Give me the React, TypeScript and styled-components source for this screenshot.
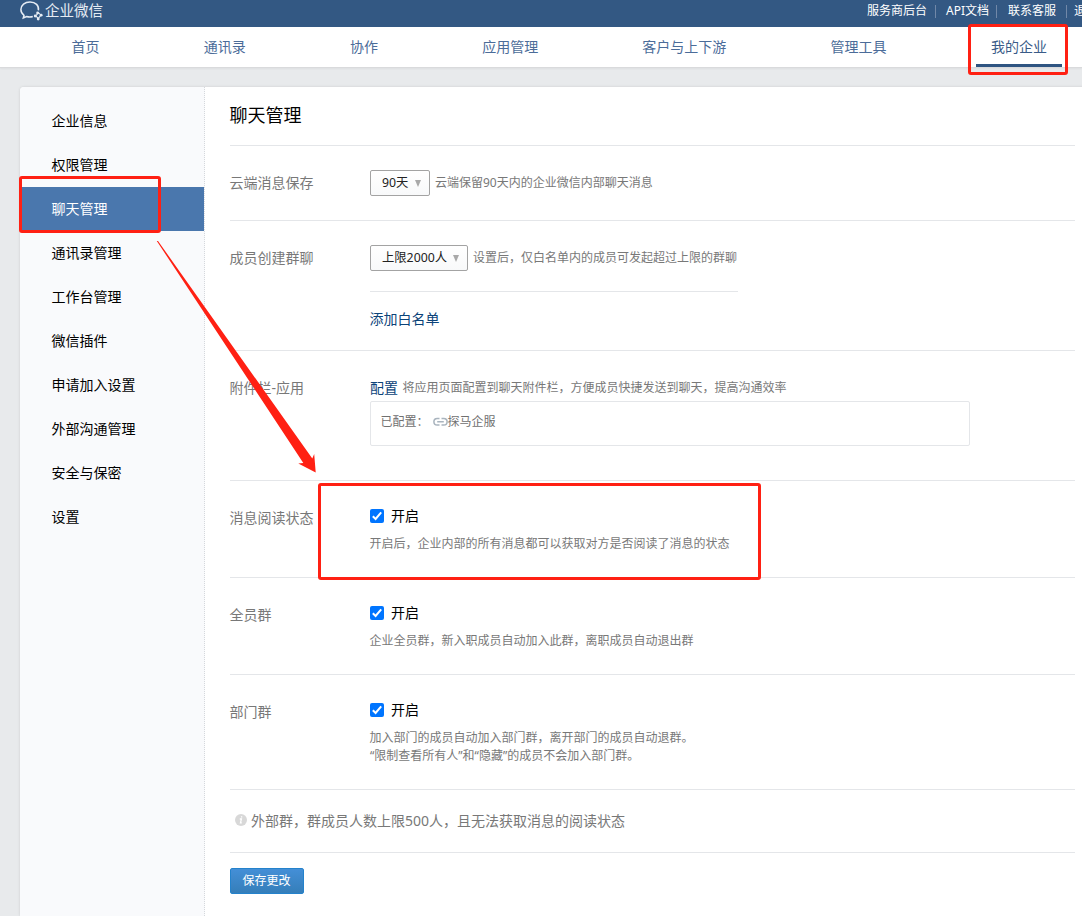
import React from 'react';
import styled, { createGlobalStyle } from 'styled-components';

const GlobalStyle = createGlobalStyle`
  * { box-sizing: border-box; }
  body {
    margin: 0;
    background: #e8eaec;
    color: #000;
    font: 14px/20px "Noto Sans", "Noto Sans CJK SC", sans-serif;
    overflow: hidden;
  }
`;

const Page = styled.div`
  position: relative;
  width: 1082px;
  height: 916px;
  overflow: hidden;
  display: flex;
  flex-direction: column;
`;

const TopBar = styled.header`
  flex: none;
  height: 27px;
  padding-left: 20px;
  background: #335883;
  color: #fff;
  display: flex;
  justify-content: space-between;
`;

const Brand = styled.div`
  display: flex;
  gap: 2px;
  height: 21px;
  font-size: 14.5px;
  line-height: 21px;
  color: #e6ecf4;
  white-space: nowrap;
`;

const TopLinks = styled.div`
  display: flex;
  width: 215px;
  overflow: hidden;
  font-size: 12px;
  line-height: 22px;
  white-space: nowrap;
`;

const TopLink = styled.a<{ $gap?: number }>`
  flex: none;
  height: 22px;
  margin-right: ${p => p.$gap ?? 9}px;
`;

const TopSeparator = styled.i<{ $gap?: number }>`
  flex: none;
  width: 1px;
  height: 13px;
  margin: 5px ${p => p.$gap ?? 10}px 0 0;
  background: #7188a8;
`;

const NavBar = styled.nav`
  flex: none;
  height: 41px;
  padding-left: 19.5px;
  background: #fff;
  border-bottom: 1px solid #d9dadc;
  box-shadow: 0 1px 2px rgba(0, 0, 0, 0.05);
  display: flex;
`;

const NavItem = styled.a<{ $active?: boolean }>`
  flex: none;
  height: 40px;
  padding: 0 ${p => (p.$active ? 15 : 52.1)}px;
  margin-left: ${p => (p.$active ? 37.4 : 0)}px;
  border-bottom: ${p => (p.$active ? '3px solid #2e5481' : '0')};
  color: ${p => (p.$active ? '#3a5b88' : '#4b6c99')};
  line-height: 40px;
  white-space: nowrap;
`;

const Panel = styled.main`
  flex: 1;
  margin: 19px 0 0 20px;
  width: 1100px;
  background: #fff;
  border-radius: 4px 0 0 0;
  box-shadow: 0 0 3px rgba(0, 0, 0, 0.12);
  overflow: hidden;
  display: flex;
`;

const Sidebar = styled.aside`
  flex: none;
  width: 185px;
  padding-top: 12px;
  background: #f9fafc;
  border-right: 1px dotted #d5d8dc;
`;

const SideItem = styled.a<{ $active?: boolean }>`
  display: block;
  height: 44px;
  padding-left: 31.5px;
  line-height: 44px;
  color: ${p => (p.$active ? '#fff' : '#000')};
  background: ${p => (p.$active ? '#4a77ad' : 'transparent')};
`;

const Content = styled.section`
  flex: none;
  width: 870px;
  padding-left: 25px;
`;

const Title = styled.h1`
  height: 59px;
  margin: 0;
  border-bottom: 1px solid #e4e6e9;
  font-size: 18px;
  font-weight: 400;
  line-height: 57px;
  text-indent: -0.5px;
`;

const Row = styled.div<{ $height: number }>`
  height: ${p => p.$height}px;
  padding-top: 24px;
  border-bottom: 1px solid #e4e6e9;
  display: flex;
`;

const Label = styled.div`
  flex: none;
  width: 140px;
  height: 26px;
  line-height: 26px;
  color: #787878;
  text-indent: -0.5px;
`;

const Field = styled.div``;

const Line = styled.div`
  display: flex;
  height: 26px;
  line-height: 26px;
  white-space: nowrap;
`;

const SelectBox = styled.button<{ $width: number }>`
  width: ${p => p.$width}px;
  height: 26px;
  margin: 0 5px 0 0;
  padding: 0 8px 0 11px;
  display: flex;
  align-items: center;
  justify-content: space-between;
  border: 1px solid #a3a3a3;
  border-radius: 2px;
  background: linear-gradient(#fff, #f8f9fa);
  color: #222;
  font: 12.3px/22px "Noto Sans", "Noto Sans CJK SC", sans-serif;
`;

const Caret = styled.i`
  border: solid transparent;
  border-width: 7px 3.5px 0;
  border-top-color: #a9a9a9;
`;

const Hint = styled.span<{ $gap?: number }>`
  margin-left: ${p => p.$gap ?? 0}px;
  font-size: 12px;
  color: #787878;
`;

const Description = styled.p`
  margin: 8px 0 0;
  font-size: 12px;
  line-height: 18px;
  color: #787878;
  white-space: nowrap;
  text-indent: -0.5px;
`;

const AddList = styled.div`
  width: 368px;
  margin-top: 20px;
  padding-top: 16px;
  border-top: 1px solid #e4e6e9;
  line-height: 22px;
  text-indent: -0.5px;
`;

const TextLink = styled.a`
  color: #0b4379;
`;

const ConfigBox = styled.div`
  width: 600px;
  height: 45px;
  padding: 0 0 4px 9.5px;
  border: 1px solid #e4e6e9;
  border-radius: 2px;
  display: flex;
  align-items: center;
  font-size: 12px;
  line-height: 18px;
  color: #707070;
`;

const ConfigIcon = styled.svg`
  margin-left: 4px;
`;

const CheckLine = styled.label`
  display: flex;
  align-items: center;
  gap: 7px;
  height: 22px;
  line-height: 22px;
`;

const CheckMark = styled.svg`
  flex: none;
`;

const Notice = styled.div`
  height: 63px;
  padding-left: 5px;
  border-bottom: 1px solid #e4e6e9;
  display: flex;
  align-items: center;
  gap: 4px;
  color: #787878;
`;

const InfoIcon = styled.svg`
  margin-bottom: 2px;
`;

const SaveButton = styled.button`
  width: 74px;
  height: 26px;
  margin-top: 15px;
  padding: 0 1px 0 0;
  border: 1px solid #2482cc;
  border-radius: 2px;
  background: linear-gradient(#448fd7, #357eb9);
  color: #fff;
  font: 12px/22px "Noto Sans", "Noto Sans CJK SC", sans-serif;
`;

const Highlight = styled.div<{ $x: number; $y: number; $w: number; $h: number }>`
  position: absolute;
  left: ${p => p.$x}px;
  top: ${p => p.$y}px;
  width: ${p => p.$w}px;
  height: ${p => p.$h}px;
  border: 3px solid #ff2013;
  border-radius: 3px;
`;

const Arrow = styled.svg`
  position: absolute;
  left: 150px;
  top: 235px;
`;

const navItems = ['首页', '通讯录', '协作', '应用管理', '客户与上下游', '管理工具'];
const sideItems = [
  '企业信息', '权限管理', '聊天管理', '通讯录管理', '工作台管理',
  '微信插件', '申请加入设置', '外部沟通管理', '安全与保密', '设置',
];

const toggles = [
  { label: '消息阅读状态', height: 97, lines: ['开启后，企业内部的所有消息都可以获取对方是否阅读了消息的状态'] },
  { label: '全员群', height: 97, lines: ['企业全员群，新入职成员自动加入此群，离职成员自动退出群'] },
  { label: '部门群', height: 115, lines: ['加入部门的成员自动加入部门群，离开部门的成员自动退群。', '“限制查看所有人”和“隐藏”的成员不会加入部门群。'] },
];

const Checked = () => (
  <CheckMark width="14" height="14" viewBox="0 0 14 14">
    <rect width="14" height="14" rx="2" fill="#0075ff" />
    <path d="M2.8 7.3 5.6 10 11.2 3.4" fill="none" stroke="#fff" strokeWidth="2" />
  </CheckMark>
);

export default function App() {
  return (
    <>
      <GlobalStyle />
      <Page>
        <TopBar>
          <Brand>
            <svg width="23" height="22" viewBox="0 0 23 22" fill="none" stroke="#e6ecf4">
              <path d="M18.4 10.4C19.200 5.600 15.600 2 10 2 4.800 2 .9 5.300.9 9.600c0 2.400 1.200 4.400 3.100 5.700L3.300 17.900l3.300-1.400c2 .6 4.300.6 6.200 0" strokeWidth="1.5" />
              <path d="m18.400 12.700 2.500 2.500-2.600 3.300-2.600-2.600z" strokeWidth="1.100" />
              <g fill="#e6ecf4" stroke="none">
                <circle cx="17.600" cy="12.900" r="1.400" />
                <circle cx="21.200" cy="15.200" r="1.400" />
                <circle cx="18.200" cy="19" r="1.400" />
                <circle cx="15.200" cy="16" r="1.400" />
              </g>
            </svg>
            <span>企业微信</span>
          </Brand>
          <TopLinks>
            <TopLink $gap={8}>服务商后台</TopLink><TopSeparator />
            <TopLink $gap={7}>API文档</TopLink><TopSeparator $gap={11} />
            <TopLink $gap={10}>联系客服</TopLink><TopSeparator $gap={7} />
            <TopLink>退</TopLink>
          </TopLinks>
        </TopBar>
        <NavBar>
          {navItems.map(item => <NavItem key={item}>{item}</NavItem>)}
          <NavItem $active>我的企业</NavItem>
        </NavBar>
        <Panel>
          <Sidebar>
            {sideItems.map(item => (
              <SideItem key={item} $active={item === '聊天管理'}>{item}</SideItem>
            ))}
          </Sidebar>
          <Content>
            <Title>聊天管理</Title>
            <Row $height={75}>
              <Label>云端消息保存</Label>
              <Field>
                <Line>
                  <SelectBox $width={60}>90天<Caret /></SelectBox>
                  <Hint>云端保留90天内的企业微信内部聊天消息</Hint>
                </Line>
              </Field>
            </Row>
            <Row $height={130}>
              <Label>成员创建群聊</Label>
              <Field>
                <Line>
                  <SelectBox $width={98}>上限2000人<Caret /></SelectBox>
                  <Hint>设置后，仅白名单内的成员可发起超过上限的群聊</Hint>
                </Line>
                <AddList><TextLink>添加白名单</TextLink></AddList>
              </Field>
            </Row>
            <Row $height={130}>
              <Label>附件栏-应用</Label>
              <Field>
                <Line>
                  <TextLink>配置</TextLink>
                  <Hint $gap={4.5}>将应用页面配置到聊天附件栏，方便成员快捷发送到聊天，提高沟通效率</Hint>
                </Line>
                <ConfigBox>
                  <span>已配置：</span>
                  <ConfigIcon width="15" height="10" viewBox="0 0 15 10" fill="none" stroke="#a9b4be" strokeWidth="1.5">
                    <path d="M6.500 1.500H4.200a3.300 3.300 0 0 0 0 6.600h2.300M8.500 1.500h2.300a3.300 3.300 0 0 1 0 6.600H8.500M4.200 4.800h6.600" />
                  </ConfigIcon>
                  <span>探马企服</span>
                </ConfigBox>
              </Field>
            </Row>
            {toggles.map(toggle => (
              <Row key={toggle.label} $height={toggle.height}>
                <Label>{toggle.label}</Label>
                <Field>
                  <CheckLine><Checked />开启</CheckLine>
                  <Description>
                    {toggle.lines.map((line, i) => (
                      <React.Fragment key={line}>{i > 0 && <br />}{line}</React.Fragment>
                    ))}
                  </Description>
                </Field>
              </Row>
            ))}
            <Notice>
              <InfoIcon width="12" height="12" viewBox="0 0 12 12">
                <circle cx="6" cy="6" r="6" fill="#d8d8d8" />
                <path d="M4.800 5h1.600L5.500 8.800h1.300M6.600 2.300v1.300" fill="none" stroke="#fff" strokeWidth="1.300" />
              </InfoIcon>
              <span>外部群，群成员人数上限500人，且无法获取消息的阅读状态</span>
            </Notice>
            <SaveButton>保存更改</SaveButton>
          </Content>
        </Panel>
        <Highlight $x={968} $y={24} $w={100} $h={51} />
        <Highlight $x={19} $y={176} $w={142} $h={57} />
        <Highlight $x={318} $y={483} $w={443} $h={97} />
        <Arrow width="175" height="245" viewBox="150 235 175 245">
          <path d="M156.800 241 L158 241 L312.300 458.500 L314.200 454 L315.700 472.500 L298.300 463.500 L303.300 463 Z" fill="#ff2013" />
        </Arrow>
      </Page>
    </>
  );
}
